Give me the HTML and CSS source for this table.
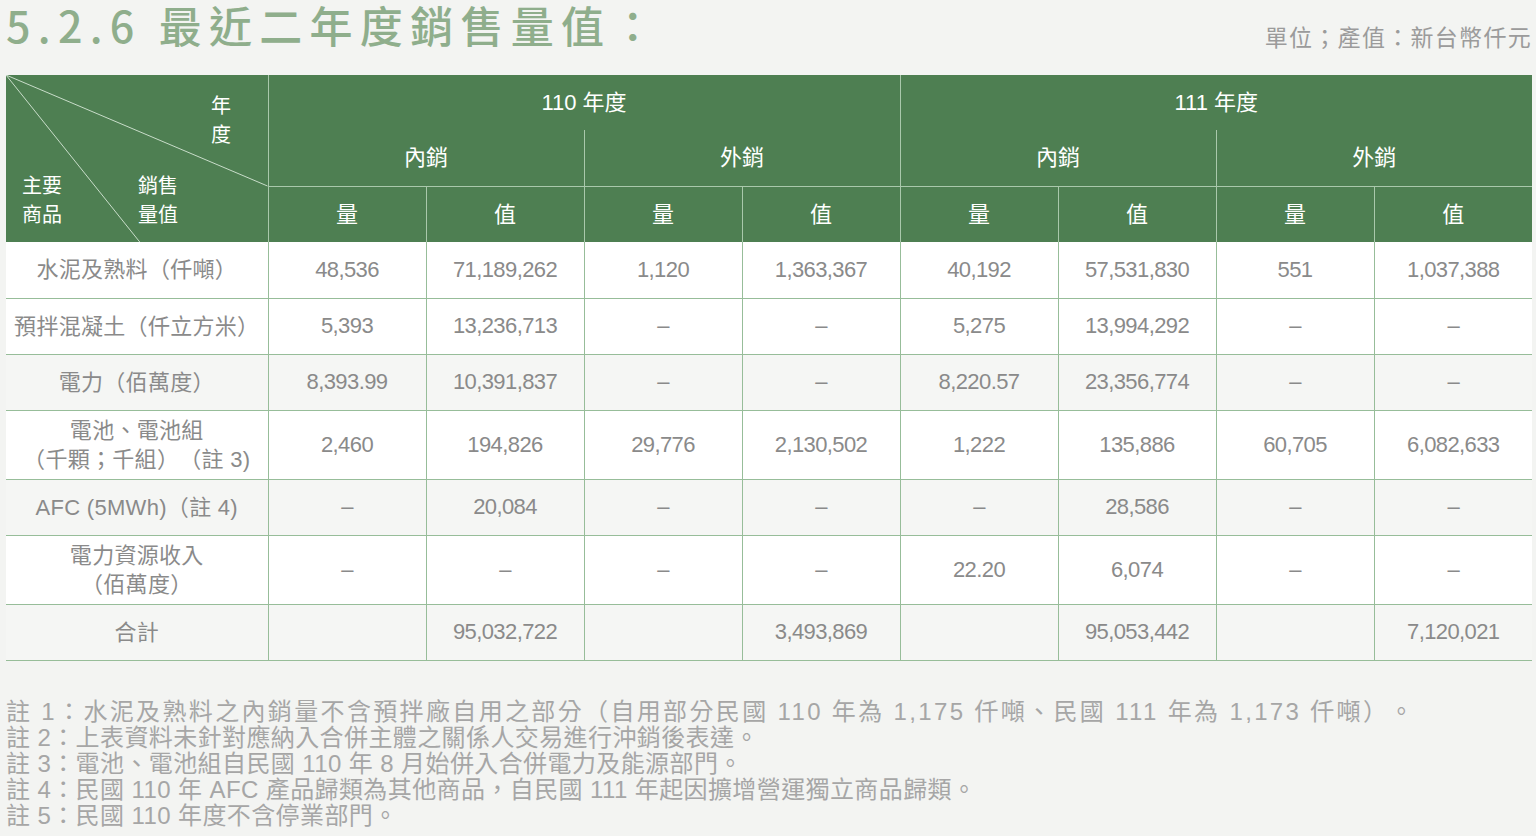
FILE: index.html
```html
<!DOCTYPE html>
<html lang="zh-Hant">
<head>
<meta charset="utf-8">
<title>5.2.6 最近二年度銷售量值</title>
<link rel="stylesheet" href="styles.css">
</head>
<body>
<div class="page">
  <div class="top">
    <h1 class="title">5.2.6 最近二年度銷售量值：</h1>
    <div class="unit">單位；產值：新台幣仟元</div>
  </div>
  <table class="sales">
    <colgroup>
      <col class="c-first">
      <col class="c"><col class="c"><col class="c"><col class="c">
      <col class="c"><col class="c"><col class="c"><col class="c">
    </colgroup>
    <thead>
      <tr class="h1">
        <th class="corner" rowspan="3">
          <svg class="diag" viewBox="0 0 262 167" preserveAspectRatio="none">
            <line x1="0" y1="0" x2="262" y2="111"></line>
            <line x1="0" y1="0" x2="134" y2="167"></line>
          </svg>
          <span class="lbl lbl-year">年<br>度</span>
          <span class="lbl lbl-prod">主要<br>商品</span>
          <span class="lbl lbl-val">銷售<br>量值</span>
        </th>
        <th colspan="4" class="yr">110 年度</th>
        <th colspan="4" class="yr">111 年度</th>
      </tr>
      <tr class="h2">
        <th colspan="2" class="grp">內銷</th>
        <th colspan="2" class="sub">外銷</th>
        <th colspan="2" class="grp">內銷</th>
        <th colspan="2" class="sub">外銷</th>
      </tr>
      <tr class="h3">
        <th>量</th><th>值</th><th>量</th><th>值</th>
        <th>量</th><th>值</th><th>量</th><th>值</th>
      </tr>
    </thead>
    <tbody>
      <tr class="r">
        <td class="name">水泥及熟料（仟噸）</td>
        <td>48,536</td><td>71,189,262</td><td>1,120</td><td>1,363,367</td>
        <td>40,192</td><td>57,531,830</td><td>551</td><td>1,037,388</td>
      </tr>
      <tr class="r">
        <td class="name">預拌混凝土（仟立方米）</td>
        <td>5,393</td><td>13,236,713</td><td>–</td><td>–</td>
        <td>5,275</td><td>13,994,292</td><td>–</td><td>–</td>
      </tr>
      <tr class="r alt">
        <td class="name">電力（佰萬度）</td>
        <td>8,393.99</td><td>10,391,837</td><td>–</td><td>–</td>
        <td>8,220.57</td><td>23,356,774</td><td>–</td><td>–</td>
      </tr>
      <tr class="r tall">
        <td class="name">電池、電池組<br>（千顆；千組）（註 3)</td>
        <td>2,460</td><td>194,826</td><td>29,776</td><td>2,130,502</td>
        <td>1,222</td><td>135,886</td><td>60,705</td><td>6,082,633</td>
      </tr>
      <tr class="r alt">
        <td class="name">AFC (5MWh)（註 4)</td>
        <td>–</td><td>20,084</td><td>–</td><td>–</td>
        <td>–</td><td>28,586</td><td>–</td><td>–</td>
      </tr>
      <tr class="r tall">
        <td class="name">電力資源收入<br>（佰萬度）</td>
        <td>–</td><td>–</td><td>–</td><td>–</td>
        <td>22.20</td><td>6,074</td><td>–</td><td>–</td>
      </tr>
      <tr class="r alt">
        <td class="name">合計</td>
        <td></td><td>95,032,722</td><td></td><td>3,493,869</td>
        <td></td><td>95,053,442</td><td></td><td>7,120,021</td>
      </tr>
    </tbody>
  </table>
  <div class="notes">
    <p class="note wide">註 1：水泥及熟料之內銷量不含預拌廠自用之部分（自用部分民國 110 年為 1,175 仟噸、民國 111 年為 1,173 仟噸）。</p>
    <p class="note">註 2：上表資料未針對應納入合併主體之關係人交易進行沖銷後表達。</p>
    <p class="note">註 3：電池、電池組自民國 110 年 8 月始併入合併電力及能源部門。</p>
    <p class="note">註 4：民國 110 年 AFC 產品歸類為其他商品，自民國 111 年起因擴增營運獨立商品歸類。</p>
    <p class="note">註 5：民國 110 年度不含停業部門。</p>
  </div>
</div>
</body>
</html>
```

FILE: styles.css
```css
* { box-sizing: border-box; }
html, body { margin: 0; padding: 0; }
body {
  background: #f3f4f2;
  font-family: "Liberation Sans", "Noto Sans CJK TC", sans-serif;
  color: #8a8a8a;
  text-spacing-trim: space-all;
}
.page {
  width: 1536px;
  height: 836px;
  padding: 0 4px 0 6px;
  overflow: hidden;
}
.top {
  display: flex;
  justify-content: space-between;
  align-items: flex-end;
  height: 75px;
  padding-bottom: 26px;
}
.title {
  margin: 0;
  font-family: "Noto Sans CJK TC", sans-serif;
  font-weight: 500;
  font-size: 43px;
  line-height: 48px;
  letter-spacing: 7.3px;
  color: #8fae8c;
  align-self: flex-start;
  white-space: nowrap;
}
.unit {
  font-family: "Noto Sans CJK TC", sans-serif;
  font-size: 23px;
  line-height: 26px;
  letter-spacing: 1.3px;
  color: #9b9b9b;
  white-space: nowrap;
}
.sales {
  border-collapse: collapse;
  table-layout: fixed;
  width: 1526px;
}
.c-first { width: 262px; }
.c { width: 158px; }
.sales th {
  background: #4e7f52;
  color: #ffffff;
  font-family: "Liberation Sans", "Noto Sans CJK TC", sans-serif;
  font-weight: 400;
  font-size: 22px;
  padding: 0 0 5px 0;
  text-align: center;
  border-left: 1px solid #a9c8ab;
}
.h1 th { height: 55px; }
.h2 th { height: 56px; }
.h3 th { height: 56px; border-top: 1px solid #a9c8ab; }
.sales th.corner {
  position: relative;
  border-left: none;
  vertical-align: top;
  padding: 0;
}
.diag {
  position: absolute;
  left: 0;
  top: 0;
  width: 100%;
  height: 100%;
}
.diag line { stroke: #c9ddca; stroke-width: 1; }
.lbl {
  position: absolute;
  font-family: "Noto Sans CJK TC", sans-serif;
  font-size: 20px;
  line-height: 29px;
  text-align: left;
  color: #ffffff;
}
.lbl-year { left: 205px; top: 15px; }
.lbl-prod { left: 16px; top: 95px; }
.lbl-val { left: 132px; top: 95px; }
.sales td {
  font-size: 22px;
  text-align: center;
  padding: 0;
  height: 56px;
  letter-spacing: -0.6px;
  color: #8a8a8a;
  border-left: 1px solid #97bd99;
  border-bottom: 1px solid #97bd99;
  background: #ffffff;
}
.sales td.name {
  border-left: none;
  line-height: 29px;
  letter-spacing: 0.3px;
  white-space: nowrap;
}
.r.alt td { background: #f5f6f4; }
.r.tall td { height: 69px; }
.notes {
  padding-top: 38px;
}
.note {
  margin: 0;
  font-size: 24px;
  line-height: 26px;
  color: #a6a6a6;
  letter-spacing: 0.4px;
  white-space: nowrap;
}
.note.wide { letter-spacing: 2.35px; }
```
